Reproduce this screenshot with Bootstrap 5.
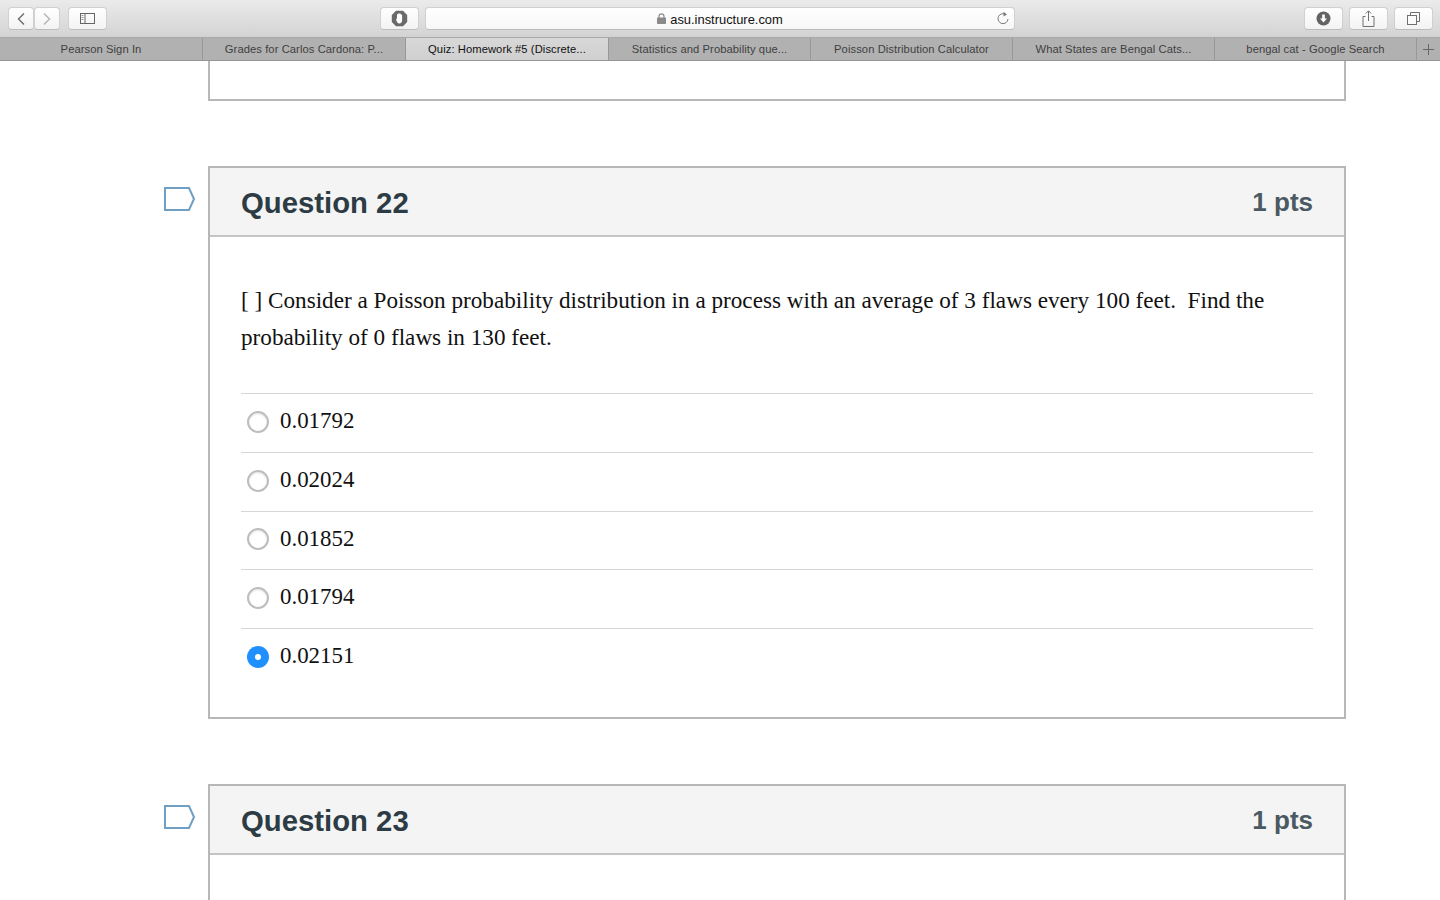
<!DOCTYPE html>
<html lang="en">
<head>
<meta charset="UTF-8">
<title>Quiz: Homework #5</title>
<link href="https://cdn.jsdelivr.net/npm/bootstrap@5.3.0/dist/css/bootstrap.min.css" rel="stylesheet">
<style>
  html, body { height: 900px; overflow: hidden; background: #fff; }
  body { font-family: "Liberation Sans", Arial, sans-serif; }
  .toolbar-top { height: 38px; background: linear-gradient(#ebebeb, #d3d3d3); border-bottom: 1px solid #a9a9a9; padding: 0 7px 0 8px; }
  .tool-btn { height: 23px; width: 39px; background: linear-gradient(#fff, #f3f3f3); border: 1px solid #d0d0d0; border-bottom-color: #bcbcbc; border-radius: 4px; }
  .tool-btn.nav-half { width: 26px; }
  .shield-btn { margin-left: 273px; }
  .right-btn { margin-left: 6px; }
  .url-field { width: 590px; height: 23px; margin-left: 6px; background: linear-gradient(#fff, #f7f7f7); border: 1px solid #d0d0d0; border-bottom-color: #bcbcbc; border-radius: 4px; font-size: 12.9px; color: #111; position: relative; }
  .url-field span { padding-top: 2px; }
  .url-field .reload-icon { position: absolute; right: 4px; top: 3px; }
  .tab-strip { height: 23px; background: #b1b1b1; border-bottom: 1px solid #959595; font-size: 11.2px; letter-spacing: .08px; color: #3f3f3f; }
  .tab-item { width: 202px; border-right: 1px solid #989898; white-space: nowrap; }
  .tab-item:nth-child(-n+3) { width: 203px; }
  .tab-item.active-tab { background: linear-gradient(#d8d8d8, #d0d0d0); color: #111; }
  .tab-plus { width: 23px; }
  .page-col { width: 1138px; margin-left: 208px; }
  .prev-end { height: 40px; border: 2px solid #b7b7b7; border-top: 0; margin-bottom: 65px; }
  .quiz-box { border: 2px solid #b7b7b7; margin-bottom: 65px; position: relative; }
  .flag-mark { position: absolute; left: -47px; top: 18px; }
  .quiz-head { height: 69px; background: #f4f4f4; border-bottom: 2px solid #c4c4c4; padding: 0 31px; color: #2d3b45; font-weight: 700; }
  .quiz-title { font-size: 29.3px; padding-top: 2px; }
  .quiz-pts { font-size: 26px; color: #4b5962; padding-top: 1px; }
  .quiz-body { padding: 45px 31px 32px; height: 480px; }
  .quiz-text { font-family: "Liberation Serif", "Times New Roman", serif; font-size: 23.18px; line-height: 37px; color: #111; margin-bottom: 37px; }
  .choice-row { height: 58.75px; border-top: 1px solid #d6d6d6; padding-bottom: 2px; font-family: "Liberation Serif", "Times New Roman", serif; font-size: 22.9px; color: #111; padding-left: 6px; gap: 11px; }
  .choice-label { margin-bottom: 1px; }
  .radio-off { width: 22px; height: 22px; border-radius: 50%; background: #fff; border: 2px solid #bdbdbd; box-shadow: inset 0 1px 2px rgba(0,0,0,.12); }
  .radio-on { width: 22px; height: 22px; border-radius: 50%; background: #2090ff; }
  .radio-on span { width: 6px; height: 6px; border-radius: 50%; background: #fff; }
</style>
</head>
<body>
  <div class="toolbar-top d-flex align-items-center">
    <div class="d-flex">
      <div class="tool-btn nav-half d-flex align-items-center justify-content-center">
        <svg width="10" height="14" viewBox="0 0 10 14"><path d="M8 1.5 2.5 7 8 12.5" fill="none" stroke="#6b6b6b" stroke-width="1.4"/></svg>
      </div>
      <div class="tool-btn nav-half d-flex align-items-center justify-content-center">
        <svg width="10" height="14" viewBox="0 0 10 14"><path d="M2 1.5 7.5 7 2 12.5" fill="none" stroke="#b4b4b4" stroke-width="1.4"/></svg>
      </div>
    </div>
    <div class="tool-btn d-flex align-items-center justify-content-center ms-2">
      <svg width="15" height="11" viewBox="0 0 15 11"><rect x=".5" y=".5" width="14" height="10" fill="none" stroke="#666"/><path d="M5 .5v10" stroke="#666"/><path d="M1.5 2.5h2M1.5 4.5h2M1.5 6.5h2" stroke="#999"/></svg>
    </div>
    <div class="tool-btn shield-btn d-flex align-items-center justify-content-center">
      <svg width="17" height="17" viewBox="0 0 17 17"><path d="M5 .8h7L16.2 5v7L12 16.2H5L.8 12V5Z" fill="#6a6a6a"/><path d="M6 8V4.5a.7.7 0 0 1 1.3 0V3.500a.7.7 0 0 1 1.300 0v.5a.7.7 0 0 1 1.300 0v1a.7.7 0 0 1 1.200 0V10c0 2-1 3.500-2.800 3.500S6.500 12.500 5 10Z" fill="#fff"/></svg>
    </div>
    <div class="url-field d-flex align-items-center justify-content-center">
      <svg class="me-1" width="9" height="11" viewBox="0 0 9 11"><path d="M2 5V3.300a2.500 2.500 0 0 1 5 0V5" fill="none" stroke="#8a8a8a" stroke-width="1.200"/><rect y="4.500" width="9" height="6.500" rx=".8" fill="#8a8a8a"/></svg>
      <span>asu.instructure.com</span>
      <svg class="reload-icon" width="14" height="15" viewBox="0 0 14 15"><path d="M9.800 3.500A5 5 0 1 0 12 8" fill="none" stroke="#7a7a7a" stroke-width="1"/><path d="M7.500 .8 11 3.500 7.500 5.500Z" fill="#7a7a7a"/></svg>
    </div>
    <div class="tool-btn d-flex align-items-center justify-content-center ms-auto">
      <svg width="15" height="15" viewBox="0 0 15 15"><circle cx="7.500" cy="7.500" r="7" fill="#636363"/><path d="M6.200 3.500h2.600v4h2.200l-3.500 4-3.500-4h2.200Z" fill="#fff"/></svg>
    </div>
    <div class="tool-btn right-btn d-flex align-items-center justify-content-center">
      <svg width="13" height="17" viewBox="0 0 13 17"><path d="M3.500 6.500H1v10h11v-10H9.500" fill="none" stroke="#707070"/><path d="M6.500 11V1M3.800 3.500 6.500.8l2.700 2.700" fill="none" stroke="#707070"/></svg>
    </div>
    <div class="tool-btn right-btn d-flex align-items-center justify-content-center">
      <svg width="13" height="13" viewBox="0 0 13 13"><rect x=".5" y="3.500" width="9" height="9" fill="#fbfbfb" stroke="#707070"/><path d="M3.500 3.500V.5h9v9h-3" fill="none" stroke="#707070"/></svg>
    </div>
  </div>
  <div class="tab-strip d-flex">
    <div class="tab-item d-flex align-items-center justify-content-center">Pearson Sign In</div>
    <div class="tab-item d-flex align-items-center justify-content-center">Grades for Carlos Cardona: P...</div>
    <div class="tab-item active-tab d-flex align-items-center justify-content-center">Quiz: Homework #5 (Discrete...</div>
    <div class="tab-item d-flex align-items-center justify-content-center">Statistics and Probability que...</div>
    <div class="tab-item d-flex align-items-center justify-content-center">Poisson Distribution Calculator</div>
    <div class="tab-item d-flex align-items-center justify-content-center">What States are Bengal Cats...</div>
    <div class="tab-item d-flex align-items-center justify-content-center">bengal cat - Google Search</div>
    <div class="tab-plus d-flex align-items-center justify-content-center">
      <svg width="11" height="11" viewBox="0 0 11 11"><path d="M5.500 0v11M0 5.500h11" stroke="#666"/></svg>
    </div>
  </div>

  <div class="page-col">
    <div class="prev-end"></div>

    <div class="quiz-box">
      <svg class="flag-mark" width="33" height="27" viewBox="0 0 33 27"><path d="M2 2h24l5 11-5 11H2Z" fill="#fff" stroke="#6f9fc2" stroke-width="2"/></svg>
      <div class="quiz-head d-flex align-items-center justify-content-between">
        <div class="quiz-title">Question 22</div>
        <div class="quiz-pts">1 pts</div>
      </div>
      <div class="quiz-body">
        <p class="quiz-text">[ ] Consider a Poisson probability distribution in a process with an average of 3 flaws every 100 feet.&nbsp; Find the probability of 0 flaws in 130 feet.</p>
        <div class="choice-row d-flex align-items-center"><span class="radio-off"></span><span class="choice-label">0.01792</span></div>
        <div class="choice-row d-flex align-items-center"><span class="radio-off"></span><span class="choice-label">0.02024</span></div>
        <div class="choice-row d-flex align-items-center"><span class="radio-off"></span><span class="choice-label">0.01852</span></div>
        <div class="choice-row d-flex align-items-center"><span class="radio-off"></span><span class="choice-label">0.01794</span></div>
        <div class="choice-row d-flex align-items-center"><span class="radio-on d-flex align-items-center justify-content-center"><span></span></span><span class="choice-label">0.02151</span></div>
      </div>
    </div>

    <div class="quiz-box">
      <svg class="flag-mark" width="33" height="27" viewBox="0 0 33 27"><path d="M2 2h24l5 11-5 11H2Z" fill="#fff" stroke="#6f9fc2" stroke-width="2"/></svg>
      <div class="quiz-head d-flex align-items-center justify-content-between">
        <div class="quiz-title">Question 23</div>
        <div class="quiz-pts">1 pts</div>
      </div>
      <div class="quiz-body"></div>
    </div>
  </div>
</body>
</html>
